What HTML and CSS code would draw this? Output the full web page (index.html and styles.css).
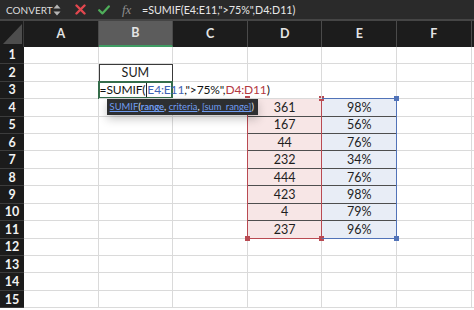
FILE: index.html
```html
<!DOCTYPE html>
<html>
  <head>
    <meta charset="utf-8" />
    <title>SUMIF</title>
    <link rel="stylesheet" href="styles.css">
  </head>
  <body>
    <div id="formulabar">
      <div class="namebox">CONVERT</div>
      <svg class="stepper" width="8" height="12" viewBox="0 0 8 12">
        <path d="M4 0.5 L7.5 4.5 L0.5 4.5 Z" fill="#b5b5b5" />
        <path d="M4 11.5 L7.5 7.5 L0.5 7.5 Z" fill="#b5b5b5" />
      </svg>
      <svg class="icon cancel" width="11" height="11" viewBox="0 0 11 11">
        <path d="M1.5 1.5 L9.5 9.5 M9.5 1.5 L1.5 9.5" stroke="#e2474e" stroke-width="2.4" stroke-linecap="round" />
      </svg>
      <svg class="icon enter" width="12" height="10" viewBox="0 0 12 10">
        <path d="M1.2 5.2 L4.4 8.4 L10.8 1.4" stroke="#4fae5a" stroke-width="2.2" fill="none" stroke-linecap="round" stroke-linejoin="round" />
      </svg>
      <span class="fx">fx</span>
      <div class="input">=SUMIF(E4:E11,"&gt;75%",D4:D11)</div>
    </div>

    <div id="sheet">
      <div class="formula">=SUMIF(<span class="caret"></span><span class="ref-e">E4:E11</span>,"&gt;75%",<span class="ref-d">D4:D11</span>)<div class="tooltip"><u>SUMIF</u><span class="punct">(</span><u class="arg"><b>range</b></u><span class="punct">, </span><u class="arg">criteria</u><span class="punct">, </span><u class="arg">[sum_range]</u><span class="punct">)</span></div></div>
      <div class="active"></div>
      <div class="range range-d">
        <i class="handle tl"></i><i class="handle tr"></i><i class="handle bl"></i><i class="handle br"></i>
      </div>
      <div class="range range-e">
        <i class="handle tr"></i><i class="handle br"></i>
      </div>
    </div>

    <script>
      const sheet = document.querySelector("#sheet");
      const letters = ["", "A", "B", "C", "D", "E", "F", "G"];
      const values = {
        B2: "SUM",
        D4: "361", D5: "167", D6: "44", D7: "232", D8: "444", D9: "423", D10: "4", D11: "237",
        E4: "98%", E5: "56%", E6: "76%", E7: "34%", E8: "76%", E9: "98%", E10: "79%", E11: "96%",
      };
      const cells = [];

      for (let r = 0; r <= 15; r++) {
        for (let c = 0; c < letters.length; c++) {
          const name = letters[c] + r;
          if (name == "C3" || name == "D3" || name == "B3") continue;
          const cell = document.createElement("div");
          if (r == 0 && c == 0) {
            cell.className = "corner";
            cell.innerHTML = '<svg width="24" height="26" viewBox="0 0 24 26"><path d="M22 3 L22 23 L3 23 Z" fill="#4d4d4d" /></svg>';
          } else if (r == 0) {
            cell.className = c == 2 ? "colhead selected" : "colhead";
            // column G only peeks in at the right edge
            cell.textContent = c == 7 ? "" : letters[c];
          } else if (c == 0) {
            cell.className = "rowhead";
            cell.textContent = r;
          } else {
            cell.className = "cell";
            if (name == "B2") cell.classList.add("boxed");
            if (c == 4 && r >= 4 && r <= 11) cell.classList.add("pink");
            if (c == 5 && r >= 4 && r <= 11) cell.classList.add("blue");
            if (r == 11 && (c == 4 || c == 5)) cell.classList.add("last");
            cell.textContent = values[name] || "";
          }
          cell.style.gridRow = r + 1;
          cell.style.gridColumn = c + 1;
          cells.push(cell);
        }
      }
      sheet.prepend(...cells);
    </script>
  </body>
</html>
```

FILE: styles.css
```css
* {
  box-sizing: border-box;
}
body {
  margin: 0;
  background-color: #ffffff;
  font-family: Lato, "Open Sans", sans-serif;
  overflow: hidden;
}
#formulabar {
  display: flex;
  align-items: center;
  height: 21px;
  background-color: #2a2a2a;
  border-bottom: 2px solid #454545;
  color: #dedede;
}
.namebox {
  width: 53px;
  padding-left: 6px;
  font-size: 10px;
  white-space: nowrap;
}
.cancel {
  margin-left: 14px;
}
.enter {
  margin-left: 12px;
}
.fx {
  margin-left: 12px;
  width: 18px;
  font-family: "Liberation Serif", serif;
  font-style: italic;
  font-size: 13px;
  color: #8e8e8e;
}
.input {
  flex: 1;
  align-self: stretch;
  display: flex;
  align-items: center;
  padding-left: 2px;
  font-size: 10.7px;
  color: #e8e8e8;
}
#sheet {
  display: grid;
  grid-template-columns: 24px repeat(6, 74.62px) 20px;
  grid-template-rows: 25.75px repeat(15, 17.45px);
}
.corner {
  background-color: #1b1b1b;
  border-right: 1px solid #3a3a3a;
}
.corner svg {
  display: block;
}
.colhead {
  display: flex;
  align-items: center;
  justify-content: center;
  background-color: #1c1c1c;
  border-right: 1px solid #4a4a4a;
  color: #e4e4e4;
  font-size: 12.5px;
  font-weight: bold;
}
.colhead.selected {
  background-color: #5c5c5c;
  border-bottom: 2px solid #3f9b62;
}
.rowhead {
  display: flex;
  align-items: center;
  justify-content: center;
  background-color: #1b1b1b;
  border-bottom: 1px solid #3c3c3c;
  color: #f2f2f2;
  font-size: 12.5px;
  font-weight: bold;
}
.cell {
  display: flex;
  align-items: center;
  justify-content: center;
  border-right: 1px solid #dadada;
  border-bottom: 1px solid #dadada;
  color: #1e1e1e;
  font-size: 12.5px;
}
.cell.boxed {
  outline: 1px solid #3a3a3a;
  outline-offset: -1px;
}
.cell.pink {
  background-color: #f7e6e6;
  border-bottom-color: #4e4e4e;
}
.cell.blue {
  background-color: #e8edf6;
  border-bottom-color: #4e4e4e;
}
.cell.last {
  border-bottom-color: #dadada;
}
.formula {
  grid-row: 4;
  grid-column: 3 / 6;
  z-index: 4;
  position: relative;
  padding-left: 1px;
  border-right: 1px solid #dadada;
  border-bottom: 1px solid #dadada;
  font-size: 12px;
  letter-spacing: -0.15px;
  line-height: 16.5px;
  white-space: nowrap;
  color: #111111;
}
.caret {
  display: inline-block;
  width: 1px;
  height: 14px;
  margin-left: 1px;
  vertical-align: -3px;
  background-color: #222;
}
.ref-e {
  color: #3f63b4;
}
.ref-d {
  color: #b4383f;
}
.tooltip {
  position: absolute;
  left: 8px;
  top: 100%;
  margin-top: 1px;
  width: 151px;
  height: 16px;
  padding-left: 3px;
  display: flex;
  align-items: center;
  background-color: #2d2f31;
  box-shadow: 0 4px 10px rgba(0, 0, 0, 0.22);
  font-size: 9.4px;
  letter-spacing: 0;
  line-height: 1;
  color: #6f9cf0;
}
.tooltip u {
  color: #6f9cf0;
}
.tooltip .punct {
  color: #e6e6e6;
  white-space: pre;
}
.active {
  grid-row: 4;
  grid-column: 3;
  z-index: 3;
  margin: -1px 0 0 -1px;
  border: 2px solid #356d4b;
}
.range {
  grid-row: 5 / 13;
  position: relative;
  z-index: 3;
  margin: -1px 0 0 -1px;
}
.range-d {
  grid-column: 5;
  border: 1.5px solid #b94a52;
}
.range-e {
  grid-column: 6;
  margin-left: 0;
  border: 1.5px solid #5173b8;
  border-left: none;
}
.handle {
  position: absolute;
  width: 5px;
  height: 5px;
  background-color: #b94a52;
}
.range-e .handle {
  background-color: #5173b8;
}
.handle.tl {
  left: -3px;
  top: -3px;
}
.handle.tr {
  right: -3px;
  top: -3px;
}
.handle.bl {
  left: -3px;
  bottom: -3px;
}
.handle.br {
  right: -3px;
  bottom: -3px;
}
```
